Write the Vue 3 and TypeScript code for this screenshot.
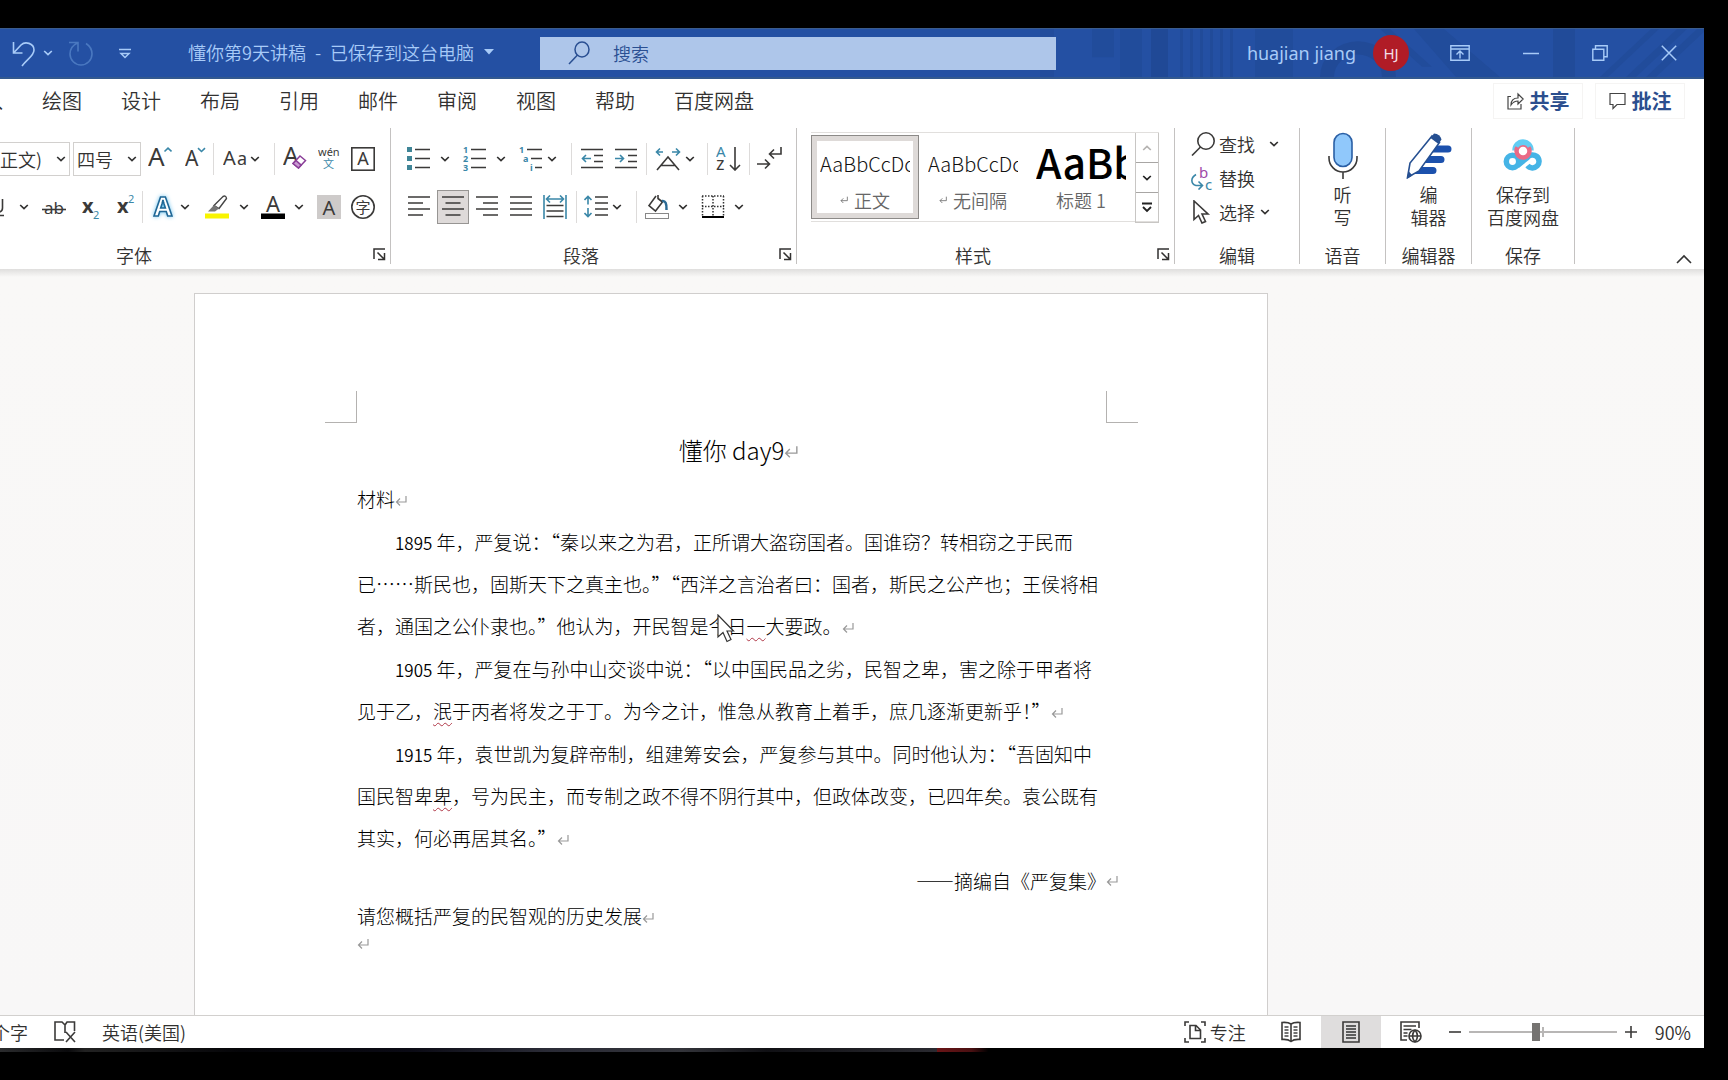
<script setup lang="ts">
import { ref } from 'vue'

const tabs: string[] = ['插入', '绘图', '设计', '布局', '引用', '邮件', '审阅', '视图', '帮助', '百度网盘']
const search = ref('')
const zoom = ref(45)
</script>

<template>
  <div class="screen" lang="zh-CN">
    <svg class="defs" aria-hidden="true">
      <symbol id="chev" viewBox="0 0 10 6"><path d="M1.2 1 5 4.6 8.800 1" fill="none" stroke="currentColor" stroke-width="1.7" /></symbol>
      <symbol id="ret" viewBox="0 0 12 12"><path d="M11 1v6H1.500M5 3.500 1.500 7 5 10.500" fill="none" stroke="currentColor" stroke-width="1.200" /></symbol>
      <symbol id="launch" viewBox="0 0 13 13"><path d="M1 11V1h11M4.500 4.500l6 6M11.500 5v6.500H5" fill="none" stroke="currentColor" stroke-width="1.500" /></symbol>
    </svg>

    <div class="window">
      <header class="titlebar">
        <svg class="pattern" viewBox="0 0 664 51" preserveAspectRatio="none" aria-hidden="true">
          <g fill="#1b3f80" opacity=".8">
            <rect x="0" y="0" width="14" height="51" opacity=".25" />
            <rect x="52" y="0" width="22" height="30" opacity=".3" />
            <rect x="80" y="0" width="22" height="51" opacity=".3" />
            <rect x="111" y="0" width="17" height="51" opacity=".45" />
            <path d="M140 0h3v51h-3zM150 0h3v51h-3zM160 0h3v51h-3zM170 0h3v51h-3zM180 0h3v51h-3zM190 0h3v51h-3z" opacity=".35" />
            <rect x="215" y="0" width="38" height="51" opacity=".3" />
            <path d="M280 51a38 38 0 0 1 76 0h-14a24 24 0 0 0-48 0z" opacity=".4" />
            <path d="M374 0h30l56 51h-44zM340 0h10l42 40h-10z" opacity=".3" />
            <rect x="513" y="0" width="22" height="51" opacity=".35" />
            <path d="M586 51 637 0h10l-51 51zM606 51 657 0h7v3l-48 48zM560 51 611 0h8l-51 51z" opacity=".3" />
          </g>
        </svg>
        <div class="quick">
          <button class="ib undo" aria-label="撤消">
            <svg width="24" height="28" viewBox="0 0 24 28"><path d="M1.500 3v11h9M2 13.500 9 6c4-4 13-2 13 5 0 6-7 9-12 16" fill="none" stroke="currentColor" stroke-width="1.600" /></svg>
            <svg class="ch" width="10" height="6"><use href="#chev" /></svg>
          </button>
          <button class="ib redo" aria-label="重复">
            <svg width="26" height="28" viewBox="0 0 26 28"><path d="M1 3.500h9v9M9.500 4C3 7 2 12 2 15c0 6 5 11 11 11s11-5 11-11c0-4-2-8-6-10.500" fill="none" stroke="currentColor" stroke-width="1.600" /></svg>
          </button>
          <button class="ib custom" aria-label="自定义快速访问工具栏">
            <svg width="12" height="11" viewBox="0 0 12 11"><path d="M0 1.500h12M2 5.500h8L6 9.500z" fill="none" stroke="currentColor" stroke-width="1.500" /></svg>
          </button>
        </div>
        <button class="ib docname">
          <span>懂你第9天讲稿</span><span class="dash">-</span><span>已保存到这台电脑</span>
          <svg width="10" height="6" viewBox="0 0 10 6"><path d="M0 0h10L5 5.500z" fill="currentColor" /></svg>
        </button>
        <label class="search">
          <svg width="22" height="24" viewBox="0 0 22 24"><g fill="none" stroke="#2a4f92" stroke-width="1.500"><ellipse cx="14" cy="8.500" rx="7" ry="7.500" /><path d="M9.500 14 1 23" /></g></svg>
          <input v-model="search" type="text" placeholder="搜索" aria-label="搜索" />
        </label>
        <div class="account">
          <span class="user">huajian jiang</span>
          <span class="avatar">HJ</span>
        </div>
        <div class="winctl">
          <button class="ib" aria-label="功能区显示选项"><svg width="20" height="16" viewBox="0 0 20 16"><path d="M.8.8h18.400v14.400H.8zM.8 4h18.400M10 13.500V6.500M6.500 9.500 10 6l3.500 3.500" fill="none" stroke="currentColor" stroke-width="1.400" /></svg></button>
          <button class="ib" aria-label="最小化"><svg width="16" height="16" viewBox="0 0 16 16"><path d="M0 8.500h16" stroke="currentColor" stroke-width="1.500" /></svg></button>
          <button class="ib" aria-label="还原"><svg width="16" height="16" viewBox="0 0 16 16"><path d="M.8 4.200h11v11h-11zM3.500 4V.8h11.700v11H12" fill="none" stroke="currentColor" stroke-width="1.400" /></svg></button>
          <button class="ib" aria-label="关闭"><svg width="16" height="16" viewBox="0 0 16 16"><path d="M.8.8l14.400 14.400M15.200.8.8 15.200" stroke="currentColor" stroke-width="1.500" /></svg></button>
        </div>
      </header>

      <div class="tabrow">
        <nav class="tabs">
          <button v-for="t in tabs" :key="t" class="ib">{{ t }}</button>
        </nav>
        <div class="collab">
          <button class="share">
            <svg width="17" height="18" viewBox="0 0 17 18"><path d="M4 4.500H1V17h13v-5M4 13c0-5 3-7 7-7V2l5.200 5-5.200 5V9c-3 0-5 1-7 4z" fill="none" stroke="#444" stroke-width="1.200" /></svg>共享
          </button>
          <button class="share">
            <svg width="17" height="18" viewBox="0 0 17 18"><path d="M1 1.500h15v11H8l-4 4v-4H1z" fill="none" stroke="#444" stroke-width="1.200" /></svg>批注
          </button>
        </div>
      </div>

      <section class="ribbon">
        <!-- 字体 -->
        <div class="group font-group">
          <div class="row f1">
            <select class="combo" aria-label="字体"><option>正文)</option></select>
            <select class="combo size" aria-label="字号"><option>四号</option></select>
            <button class="ib" aria-label="增大字号"><svg width="24" height="24" viewBox="0 0 24 24"><text x="0" y="19" font-size="26">A</text><path class="b" d="M16.500 4.500 20 1.200l3.500 3.300" /></svg></button>
            <button class="ib" aria-label="减小字号"><svg width="24" height="24" viewBox="0 0 24 24"><text x="0" y="19" font-size="21">A</text><path class="b" d="M13 1.200l3.500 3.300L20 1.200" /></svg></button>
            <i class="sep"></i>
            <button class="ib" aria-label="更改大小写"><svg width="24" height="24" viewBox="0 0 24 24"><text x="0" y="18" font-size="20">A</text><text x="14" y="18" font-size="18">a</text></svg><svg class="ch c1" width="10" height="6"><use href="#chev" /></svg></button>
            <i class="sep"></i>
            <button class="ib" aria-label="清除所有格式"><svg width="26" height="24" viewBox="0 0 26 24"><text x="0" y="18" font-size="25">A</text><path d="M10 16.500 17 9l5.500 4.500L15.500 21z" fill="#fff" stroke="#8a3e98" stroke-width="1.500" /><path d="M10 16.500l3-3 5.200 4.600-2.700 2.900z" fill="#c99ad2" stroke="#8a3e98" stroke-width="1.500" /></svg></button>
            <button class="ib" aria-label="拼音指南"><svg width="24" height="24" viewBox="0 0 24 24"><text x="0" y="9" font-size="11">wén</text><text x="5" y="21" font-size="11" class="tb">文</text></svg></button>
            <button class="ib" aria-label="字符边框"><svg width="24" height="24" viewBox="0 0 24 24"><rect class="d" x=".8" y=".8" width="22.400" height="22.400" /><text x="12" y="18" font-size="18" text-anchor="middle">A</text></svg></button>
          </div>
          <div class="row f2">
            <button class="ib" aria-label="下划线"><svg width="10" height="24" viewBox="0 0 10 24"><path class="d" d="M2.500 4v9c0 2-1 3.500-3 4M-1 20.500h5" /></svg><svg class="ch c7" width="10" height="6"><use href="#chev" /></svg></button>
            <button class="ib" aria-label="删除线"><svg width="24" height="24" viewBox="0 0 24 24"><text x="2" y="19" font-size="17">ab</text><path class="d" d="M0 14.500h24" /></svg></button>
            <button class="ib" aria-label="下标"><svg width="20" height="24" viewBox="0 0 20 24"><text x="0" y="18" font-size="20" class="bold">x</text><text x="11" y="24" font-size="11" class="tb">2</text></svg></button>
            <button class="ib" aria-label="上标"><svg width="20" height="24" viewBox="0 0 20 24"><text x="0" y="18" font-size="20" class="bold">x</text><text x="11" y="8" font-size="11" class="tb">2</text></svg></button>
            <i class="sep"></i>
            <button class="ib" aria-label="文本效果"><svg class="glow" width="24" height="24" viewBox="0 0 24 24"><text x="11" y="21" font-size="26" text-anchor="middle" class="fx">A</text></svg><svg class="ch c3" width="10" height="6"><use href="#chev" /></svg></button>
            <button class="ib" aria-label="突出显示"><svg width="26" height="24" viewBox="0 0 26 24"><rect x="1" y="18.500" width="24" height="5" fill="#f8f400" /><path d="M10 10.500 19 1.500q3-1.500 3.500 2L15 13.500z" fill="#fff" stroke="#444" stroke-width="1.400" /><path d="M10 10 4 16.500h7l4-3z" fill="#777" /></svg><svg class="ch c7" width="10" height="6"><use href="#chev" /></svg></button>
            <button class="ib" aria-label="字体颜色"><svg width="24" height="24" viewBox="0 0 24 24"><text x="12" y="16.500" font-size="22" text-anchor="middle">A</text><rect y="18.500" width="24" height="5.500" /></svg><svg class="ch c7" width="10" height="6"><use href="#chev" /></svg></button>
            <button class="ib" aria-label="字符底纹"><svg width="24" height="24" viewBox="0 0 24 24"><rect width="24" height="24" fill="#cecbca" /><text x="12" y="19.500" font-size="20" text-anchor="middle">A</text></svg></button>
            <button class="ib" aria-label="带圈字符"><svg width="24" height="24" viewBox="0 0 24 24"><circle class="d" cx="12" cy="12" r="11.200" /><text x="12" y="17.500" font-size="15" text-anchor="middle">字</text></svg></button>
          </div>
          <div class="glabel font-label"><span>字体</span><button class="ib launch" aria-label="字体设置"><svg width="13" height="13"><use href="#launch" /></svg></button></div>
        </div>

        <!-- 段落 -->
        <div class="group para-group">
          <div class="row p1">
            <button class="ib" aria-label="项目符号"><svg width="24" height="24" viewBox="0 0 24 24"><path d="M0 0h5v5H0zM0 9h5v5H0zM0 18h5v5H0z" fill="#3f8597" /><path class="d" d="M8 2.500h15M8 11.500h15M8 20.500h15" /></svg><svg class="ch c7" width="10" height="6"><use href="#chev" /></svg></button>
            <button class="ib" aria-label="编号"><svg width="24" height="24" viewBox="0 0 24 24"><g class="tb" font-size="9"><text class="bold" x="0" y="6">1</text><text class="bold" x="0" y="15">2</text><text class="bold" x="0" y="24">3</text></g><path class="d" d="M8 2.500h15M8 11.500h15M8 20.500h15" /></svg><svg class="ch c7" width="10" height="6"><use href="#chev" /></svg></button>
            <button class="ib" aria-label="多级列表"><svg width="24" height="24" viewBox="0 0 24 24"><g class="tb" font-size="9"><text class="bold" x="0" y="6">1</text><text class="bold" x="4" y="15">a</text><text class="bold" x="11" y="24">i</text></g><path class="d" d="M8 2.500h15M12 11.500h11M16 20.500h7" /></svg><svg class="ch c3" width="10" height="6"><use href="#chev" /></svg></button>
            <i class="sep"></i>
            <button class="ib" aria-label="减少缩进量"><svg width="24" height="24" viewBox="0 0 24 24"><path class="d" d="M0 2.500h22M13 8.500h9M13 14.500h9M0 20.500h22" /><path class="b" d="M10 11.500H1.500M5 8l-3.500 3.500L5 15" /></svg></button>
            <button class="ib" aria-label="增加缩进量"><svg width="24" height="24" viewBox="0 0 24 24"><path class="d" d="M0 2.500h22M13 8.500h9M13 14.500h9M0 20.500h22" /><path class="b" d="M0 11.500h8.500M5 8l3.500 3.500L5 15" /></svg></button>
            <i class="sep"></i>
            <button class="ib" aria-label="中文版式"><svg width="26" height="24" viewBox="0 0 26 24"><path class="b" d="M8 5H1.500M5 1.500 1.500 5 5 8.500M17 5h7M21 1.500 24.500 5 21 8.500" /><path class="d" d="M2 23 13 10l11 13M6 18.500h14" /></svg><svg class="ch c3" width="10" height="6"><use href="#chev" /></svg></button>
            <i class="sep"></i>
            <button class="ib" aria-label="排序"><svg width="25" height="24" viewBox="0 0 25 24"><text x="0" y="10" font-size="15" class="tb">A</text><text x="0" y="23" font-size="18">z</text><path class="d" d="M19 0v23M14 18l5 5 5-5" /></svg></button>
            <i class="sep"></i>
            <button class="ib" aria-label="显示编辑标记"><svg width="25" height="24" viewBox="0 0 25 24"><path class="d" d="M24 0v7H13M17 2.500 12.500 7l4.500 4.500M0 17h12M8 12.500l4.500 4.500L8 21.500" /></svg></button>
          </div>
          <div class="row p2">
            <button class="ib" aria-label="左对齐"><svg width="22" height="24" viewBox="0 0 22 24"><path class="d" d="M0 2h22M0 8h15M0 14h22M0 20h15" /></svg></button>
            <button class="ib picked" aria-label="居中" aria-pressed="true"><svg width="22" height="24" viewBox="0 0 22 24"><path class="d" d="M0 2h22M3.500 8h15M0 14h22M3.500 20h15" /></svg></button>
            <button class="ib" aria-label="右对齐"><svg width="22" height="24" viewBox="0 0 22 24"><path class="d" d="M0 2h22M7 8h15M0 14h22M7 20h15" /></svg></button>
            <button class="ib" aria-label="两端对齐"><svg width="22" height="24" viewBox="0 0 22 24"><path class="d" d="M0 2h22M0 8h22M0 14h22M0 20h22" /></svg></button>
            <button class="ib" aria-label="分散对齐"><svg width="24" height="24" viewBox="0 0 24 24"><path class="b" d="M1 0v24M23 0v24M3.500 4h17M7 .5 3.500 4 7 7.500M17 .5 20.500 4 17 7.500" /><path class="d" d="M3.500 10.500h17M3.500 16h17M3.500 21.500h17" /></svg></button>
            <i class="sep"></i>
            <button class="ib" aria-label="行距"><svg width="24" height="24" viewBox="0 0 24 24"><path class="b" d="M4 1.500v8M.5 5 4 1.500 7.500 5M4 13v8M.5 18 4 21.500 7.500 18" /><path class="d" d="M11 2h13M11 8h13M11 14h13M11 20h13" /></svg><svg class="ch c3" width="10" height="6"><use href="#chev" /></svg></button>
            <i class="sep"></i>
            <button class="ib" aria-label="底纹"><svg width="24" height="24" viewBox="0 0 24 24"><path class="d" d="M11 1 4 10.500l6.500 5.500 7-9L13 3.500V0" /><path d="M17 6q5-1 4.500 9" fill="none" stroke="#2b6a94" stroke-width="2.500" /><rect x=".5" y="18.500" width="23" height="5" fill="#fff" stroke="#888" /></svg><svg class="ch c7" width="10" height="6"><use href="#chev" /></svg></button>
            <button class="ib" aria-label="边框"><svg width="24" height="24" viewBox="0 0 24 24"><path d="M1 1h22M1 11.500h22M1.500 1v20M12 1v20M22.500 1v20" fill="none" stroke="#333" stroke-width="1.500" stroke-dasharray="1.500 1.500" /><path d="M1 22h22" stroke="#000" stroke-width="2" /></svg><svg class="ch c7" width="10" height="6"><use href="#chev" /></svg></button>
          </div>
          <div class="glabel"><span>段落</span><button class="ib launch" aria-label="段落设置"><svg width="13" height="13"><use href="#launch" /></svg></button></div>
        </div>

        <!-- 样式 -->
        <div class="group style-group">
          <div class="gallery">
            <button class="style chosen"><span class="sample">AaBbCcDc</span><span class="sname"><svg width="8" height="10"><use href="#ret" /></svg>正文</span></button>
            <button class="style"><span class="sample">AaBbCcDc</span><span class="sname"><svg width="8" height="10"><use href="#ret" /></svg>无间隔</span></button>
            <button class="style"><span class="sample big">AaBb</span><span class="sname">标题 1</span></button>
            <div class="scroller">
              <button class="ib off" aria-label="上一行"><svg class="up" width="10" height="6"><use href="#chev" /></svg></button>
              <button class="ib" aria-label="下一行"><svg width="10" height="6"><use href="#chev" /></svg></button>
              <button class="ib" aria-label="其他"><svg width="12" height="11" viewBox="0 0 12 11"><path d="M1 1.500h10M2 5l4 4 4-4" fill="none" stroke="#222" stroke-width="1.800" /></svg></button>
            </div>
          </div>
          <div class="glabel"><span>样式</span><button class="ib launch" aria-label="样式窗格"><svg width="13" height="13"><use href="#launch" /></svg></button></div>
        </div>

        <!-- 编辑 -->
        <div class="group edit-group">
          <div class="edits">
            <button class="ib"><svg width="24" height="24" viewBox="0 0 24 24"><circle class="d" cx="15" cy="9" r="8.200" /><path class="d" d="M9.500 15 1 23.500" /></svg>查找<svg class="far" width="10" height="6"><use href="#chev" /></svg></button>
            <button class="ib"><svg width="24" height="24" viewBox="0 0 24 24"><text x="8" y="12" font-size="15" class="own">b</text><text x="14" y="24" font-size="15" class="tb">c</text><path class="b" d="M5 8.500C-1 12 0 18 5 19.500h6M7.500 15.500l4 4-4 4" /></svg>替换</button>
            <button class="ib"><svg width="24" height="24" viewBox="0 0 24 24"><path class="d" d="M3 1v18.500l4.500-4 3.500 7.500 3.500-1.500-3.500-7.500h6z" /></svg>选择<svg class="near" width="10" height="6"><use href="#chev" /></svg></button>
          </div>
          <div class="glabel"><span>编辑</span></div>
        </div>

        <div class="group voice-group">
          <button class="ib large">
            <svg width="30" height="50" viewBox="0 0 30 50"><rect x="6" y="2.500" width="18" height="33" rx="9" fill="#90c8fb" stroke="#2a5fa5" stroke-width="1.600" /><path class="d" d="M1 25v2a14 14 0 0 0 28 0v-2M15 41v7" /></svg>
            <span>听<br />写</span>
          </button>
          <div class="glabel"><span>语音</span></div>
        </div>

        <div class="group editor-group">
          <button class="ib large">
            <svg width="46" height="50" viewBox="0 0 46 50"><g fill="#1c51ad"><path d="M30 14.500h12a3.500 3.500 0 0 1 0 7H25zM24 25h11a3.500 3.500 0 0 1 0 7H18zM16 36h11a3.500 3.500 0 0 1 0 7H8z" /></g><path d="M26 5 4 32 1.500 46.500 13 40 33.500 11.500z" fill="#fff" stroke="#254f91" stroke-width="1.600" /><path d="M24.500 7 28 2.500q6 .5 7.500 6L32.500 13z" fill="#254f91" /><path d="M1 48l1.500-8 4 4.500z" fill="#254f91" /></svg>
            <span>编<br />辑器</span>
          </button>
          <div class="glabel"><span>编辑器</span></div>
        </div>

        <div class="group save-group">
          <button class="ib large">
            <svg width="42" height="50" viewBox="0 0 42 50"><g fill="none" stroke-width="5.500"><circle cx="10.500" cy="30.500" r="6.200" stroke="#45b4e6" /><path d="M15.500 34.500 25 27a6.500 6.500 0 1 1 .5 7.500" stroke="#45b4e6" /><path d="M13 19.500a8 8.500 0 1 1 16 0" stroke="#62cdf4" /><circle cx="21" cy="20" r="6.500" stroke="#ea6a86" stroke-width="4.500" /><path d="M14.200 15.500a8 8 0 0 1 13.600 0" stroke="#62cdf4" stroke-width="4.500" /></g></svg>
            <span>保存到<br />百度网盘</span>
          </button>
          <div class="glabel"><span>保存</span></div>
        </div>

        <button class="ib collapse" aria-label="折叠功能区"><svg width="16" height="10" viewBox="0 0 16 10"><path d="M1 9l7-7 7 7" fill="none" stroke="#333" stroke-width="1.600" /></svg></button>
      </section>

      <main class="canvas">
        <article class="page">
          <div class="corners"><i class="corner l"></i><i class="corner r"></i></div>
          <div class="text">
            <h1>懂你 day9<svg class="ret"><use href="#ret" /></svg></h1>
            <p>材料<svg class="ret"><use href="#ret" /></svg></p>
            <p class="ind"><b>1895</b> 年，严复说：“秦以来之为君，正所谓大盗窃国者。国谁窃？转相窃之于民而<br />已……斯民也，固斯天下之真主也。”“西洋之言治者曰：国者，斯民之公产也；王侯将相<br />者，通国之公仆隶也。”他认为，开民智是今日<u>一</u>大要政。<svg class="ret"><use href="#ret" /></svg></p>
            <p class="ind"><b>1905</b> 年，严复在与孙中山交谈中说：“以中国民品之劣，民智之卑，害之除于甲者将<br />见于乙，<u>泯</u>于丙者将发之于丁。为今之计，惟急从教育上着手，庶几逐渐更新乎<span class="half">！</span>”<svg class="ret"><use href="#ret" /></svg></p>
            <p class="ind"><b>1915</b> 年，袁世凯为复辟帝制，组建筹安会，严复参与其中。同时他认为：“吾固知中<br />国民智卑<u>卑</u>，号为民主，而专制之政不得不阴行其中，但政体改变，已四年矣。袁公既有<br />其实，何必再居其名。”<svg class="ret"><use href="#ret" /></svg></p>
            <p class="source"><span>——摘编自《严复集》</span><svg class="ret"><use href="#ret" /></svg></p>
            <p class="tight">请您概括严复的民智观的历史发展<svg class="ret"><use href="#ret" /></svg></p>
            <p class="tight"><svg class="ret"><use href="#ret" /></svg></p>
          </div>
          <svg class="pointer" width="18" height="30" viewBox="0 0 18 30" aria-hidden="true"><path d="M1 1v22l5-4.500 4 9 4-2-4-8.500h6.500z" fill="#fff" stroke="#333" stroke-width="1.200" /></svg>
        </article>
      </main>

      <footer class="status">
        <div class="left">
          <button class="ib count">个字</button>
          <button class="ib" aria-label="校对"><svg width="22" height="22" viewBox="0 0 22 22"><path class="d" d="M10 19H1V1h7l3 3v8M11 4l2-3h7.500v9M12 11l9 10M21 11l-9 10" /></svg></button>
          <button class="ib lang">英语(美国)</button>
        </div>
        <div class="right">
          <button class="ib focus"><svg width="22" height="22" viewBox="0 0 22 22"><path class="d" d="M5 1H1v4M1 17v4h4M17 1h4v4M21 17v4h-4M6 4.500h6l4.500 4.500v8.500H6zM11.500 4.500V9.500h5" /></svg>专注</button>
          <button class="ib view" aria-label="阅读视图"><svg width="20" height="22" viewBox="0 0 20 22"><path class="d" d="M10 3Q7 1 1 1.500v17q6-.5 9 2 3-2.500 9-2v-17Q13 1 10 3zM10 3v17.500" /><path d="M3.500 6h4M3.500 9h4M3.500 12h4M3.500 15h4M12.500 6h4M12.500 9h4M12.500 12h4M12.500 15h4" stroke="#444" stroke-width="1.500" /></svg></button>
          <button class="ib view on" aria-label="页面视图"><svg width="18" height="22" viewBox="0 0 18 22"><path class="d" d="M1 1h16v20H1z" /><path d="M4 5h10M4 8h10M4 11h10M4 14h10M4 17h10" stroke="#333" stroke-width="1.600" /></svg></button>
          <button class="ib view" aria-label="Web 版式视图"><svg width="22" height="22" viewBox="0 0 22 22"><path class="d" d="M19 7V1H1v18h6M3.500 5H16M3.500 8.500h8M3.500 12h4M3.500 15h4" /><circle class="d" cx="15" cy="15" r="6" /><path class="d" d="M9 15h12M15 9q-5 6 0 12M15 9q5 6 0 12" /></svg></button>
          <button class="ib minus" aria-label="缩小"><svg width="12" height="12"><path class="d" d="M0 6h12" /></svg></button>
          <input v-model="zoom" class="slider" type="range" min="0" max="100" aria-label="缩放" />
          <button class="ib plus" aria-label="放大"><svg width="12" height="12"><path class="d" d="M0 6h12M6 0v12" /></svg></button>
          <button class="ib pct">90%</button>
        </div>
      </footer>
      <div class="desk"></div>
    </div>
  </div>
</template>

<style>
body {
  margin: 0;
  background: #000;
}
</style>

<style scoped>
* {
  box-sizing: border-box;
}
.screen {
  min-height: 100vh;
  display: flex;
  padding: 28px 24px 28px 0;
  background: #000;
  color: #323130;
  font: 350 18px/24px 'Noto Sans CJK SC', 'Noto Sans', sans-serif;
  overflow: hidden;
}
.defs {
  position: absolute;
  width: 0;
  height: 0;
}
.window {
  flex: 1;
  min-width: 0;
  display: flex;
  flex-direction: column;
  overflow: hidden;
  white-space: nowrap;
}
.ib {
  display: flex;
  align-items: center;
  padding: 0;
  border: 0;
  background: none;
  color: inherit;
  font: inherit;
  white-space: nowrap;
}
svg {
  flex: none;
  display: block;
}
svg text {
  fill: #3b3a39;
  font-family: 'Noto Sans', 'Noto Sans CJK SC', sans-serif;
  font-weight: 400;
}
svg .bold {
  font-weight: 700;
}
svg .tb,
svg .tb text {
  fill: #3a87a8;
}
svg text.own {
  fill: #a04aa8;
}
.d {
  fill: none;
  stroke: #3b3a39;
  stroke-width: 1.6;
}
.b {
  fill: none;
  stroke: #3a87a8;
  stroke-width: 1.6;
}

/* title bar */
.titlebar {
  position: relative;
  display: flex;
  align-items: center;
  height: 51px;
  background: #2450a3;
  border-top: 1px solid #3a5c8e;
  border-bottom: 2px solid #33598f;
  color: #a8cbf8;
}
.pattern {
  position: absolute;
  top: 0;
  right: 0;
  width: 664px;
  height: 100%;
}
.titlebar > :not(.pattern) {
  position: relative;
}
.quick {
  display: flex;
  align-items: center;
  width: 188px;
  padding-left: 12px;
}
.undo {
  width: 56px;
}
.undo .ch {
  margin-left: 7px;
}
.redo {
  width: 51px;
  color: #4a78c0;
}
.docname {
  width: 352px;
  padding-bottom: 2px;
}
.dash {
  margin: 0 9px;
}
.docname svg {
  margin-left: 10px;
}
.search {
  display: flex;
  align-items: center;
  width: 516px;
  height: 33px;
  padding-left: 28px;
  background: #aec6ea;
}
.search input {
  flex: 1;
  min-width: 0;
  margin-left: 23px;
  padding: 0;
  border: 0;
  outline: 0;
  background: none;
  color: #2a4f92;
  font: inherit;
}
.search input::placeholder {
  color: #2a4f92;
  opacity: 1;
}
.account {
  display: flex;
  align-items: center;
  gap: 17px;
  margin-left: auto;
}
.user {
  font-family: 'Noto Sans', sans-serif;
  font-weight: 400;
}
.avatar {
  width: 36px;
  height: 36px;
  border-radius: 50%;
  background: #b01c26;
  color: #f3dfe6;
  font: 15px/36px 'Noto Sans', sans-serif;
  text-align: center;
}
.winctl {
  display: flex;
  gap: 53px;
  padding: 0 27px 0 41px;
}

/* tabs */
.tabrow {
  display: flex;
  align-items: center;
  justify-content: space-between;
  height: 44px;
  background: #fff;
  font-size: 20px;
}
.tabs {
  display: flex;
  gap: 39px;
  margin-left: -37px;
}
.collab {
  display: flex;
  gap: 12px;
  padding-right: 19px;
}
.share {
  display: flex;
  align-items: center;
  justify-content: center;
  gap: 6px;
  width: 90px;
  height: 36px;
  padding: 0;
  border: 1px solid #f5f4f3;
  background: #fff;
  color: #2b4e8e;
  font: inherit;
  font-weight: 700;
}

/* ribbon */
.ribbon {
  display: flex;
  padding: 5px 0;
  background: #fff;
}
.group {
  display: flex;
  flex-direction: column;
  flex: none;
  height: 136px;
  border-right: 1px solid #c4c2c1;
}
.font-group {
  width: 391px;
  padding-top: 7px;
}
.para-group {
  width: 406px;
  padding-top: 7px;
}
.style-group {
  width: 378px;
}
.edit-group {
  width: 125px;
}
.voice-group,
.editor-group {
  width: 86px;
}
.save-group {
  width: 103px;
}
.row {
  display: grid;
  align-items: center;
  height: 48px;
}
.f1 {
  grid-template-columns: 73px 75px 37px 28px 10px 51px 9px 35px 33px 24px;
}
.f2 {
  grid-template-columns: 42px 40px 35px 25px 10px 52px 57px 56px 34px 24px;
}
.p1 {
  grid-template-columns: 56px 56px 52px 10px 34px 31px 9px 52px 9px 33px 8px 25px;
  padding-left: 16px;
}
.p2 {
  grid-template-columns: 29px 39px 34px 33px 33px 8px 52px 9px 56px 52px;
  padding-left: 17px;
}
.sep {
  width: 1px;
  height: 32px;
  background: #dddbda;
}
.combo {
  appearance: none;
  width: 70px;
  height: 34px;
  padding: 0;
  border: 1px solid #d2d0ce;
  border-left: 0;
  border-radius: 0;
  background: #fff url("data:image/svg+xml,%3Csvg xmlns='http://www.w3.org/2000/svg' width='10' height='6'%3E%3Cpath d='M1.2 1 5 4.6 8.8 1' fill='none' stroke='%23333' stroke-width='1.700'/%3E%3C/svg%3E") no-repeat right 3px center;
  color: inherit;
  font: inherit;
}
.combo.size {
  width: 68px;
  padding-left: 3px;
  border-left: 1px solid #d2d0ce;
}
.c1 {
  margin-left: 3px;
}
.c3 {
  margin-left: 4px;
}
.c7 {
  margin-left: 9px;
}
.glow {
  overflow: visible;
  filter: drop-shadow(0 0 2px #6fc3ee);
}
svg .fx {
  fill: #fff;
  stroke: #1f6796;
  stroke-width: 1.6;
  font-weight: 700;
}
.picked {
  justify-content: center;
  width: 32px;
  height: 34px;
  border: 1px solid #979593;
  background: #dedad9;
}
.glabel {
  display: flex;
  align-items: center;
  margin-top: auto;
  height: 19px;
  line-height: 18px;
}
.glabel span {
  flex: 1;
  text-align: center;
}
.font-label span {
  flex: none;
  width: 268px;
}
.font-label .launch {
  margin-left: auto;
}
.launch {
  width: 17px;
}
.style-group .launch,
.para-group .launch {
  margin-left: 8px;
}
.gallery {
  display: flex;
  height: 90px;
  margin: 4px 15px 0 14px;
  border: 1px solid #e1dfdd;
  border-width: 1px 0;
}
.style {
  display: flex;
  flex-direction: column;
  align-items: center;
  width: 108px;
  height: 84px;
  margin-top: 2px;
  padding: 4px 8px 0;
  border: 1px solid transparent;
  background: none;
  color: #666;
  font: inherit;
}
.chosen {
  border: 1px solid #8c8a88;
  box-shadow: inset 0 0 0 5px #dedad8;
}
.sample {
  width: 90px;
  height: 48px;
  overflow: hidden;
  color: #111;
  font-size: 20px;
  font-weight: 300;
  line-height: 48px;
  text-align: left;
}
.big {
  color: #000;
  font-size: 41px;
  font-weight: 500;
  line-height: 42px;
}
.sname {
  display: flex;
  align-items: center;
  gap: 6px;
  line-height: 24px;
  white-space: pre;
}
.scroller {
  display: flex;
  flex-direction: column;
  width: 24px;
  height: 90px;
  border: 1px solid #c8c6c4;
  border-width: 0 1px 1px;
  color: #222;
}
.scroller .ib {
  flex: 1;
  justify-content: center;
}
.scroller .ib + .ib {
  border-top: 1px solid #a8a6a4;
}
.scroller .off {
  color: #b5b3b1;
}
.up {
  transform: rotate(180deg);
}
.edits {
  display: flex;
  flex-direction: column;
  gap: 10px;
  padding: 4px 0 0 16px;
}
.edits .ib svg:first-child {
  margin-right: 4px;
}
.far {
  margin-left: 14px;
}
.near {
  margin-left: 5px;
}
.large {
  flex-direction: column;
  padding-top: 3px;
  line-height: 23px;
}
.large span {
  margin-top: 2px;
}
.collapse {
  align-self: flex-end;
  margin: 0 12px 0 auto;
}

/* document */
.canvas {
  flex: 1 0 0;
  min-height: 0;
  overflow: hidden;
  padding: 24px 0 0 194px;
  background: linear-gradient(#dfdedd, #f9f8f7 8px, #f8f7f7);
}
.page {
  position: relative;
  width: 1074px;
  height: 1518px;
  border: 1px solid #d0cecd;
  background: #fff;
}
.corners {
  display: flex;
  justify-content: space-between;
  padding: 97px 129px 0 130px;
}
.corner {
  width: 32px;
  height: 32px;
  border-bottom: 1px solid #b4b2b0;
}
.corner.l {
  border-right: 1px solid #b4b2b0;
}
.corner.r {
  border-left: 1px solid #b4b2b0;
}
.text {
  padding: 0 161px 0 162px;
  color: #000;
  font-size: 19px;
  font-weight: 300;
  line-height: 42px;
}
h1 {
  margin: 0 0 2px;
  font-size: 24px;
  font-weight: 300;
  line-height: 53px;
  text-align: center;
}
h1 .ret {
  width: 14px;
  height: 16px;
  margin-right: -14px;
}
p {
  margin: 0 0 1px;
}
.ind {
  text-indent: 38px;
}
.ind b {
  font-size: 17px;
  font-weight: 350;
  line-height: 1;
}
.half {
  font-feature-settings: 'halt';
}
u {
  text-decoration: underline wavy #b03848 1px;
  text-underline-offset: 3px;
}
.ret {
  display: inline-block;
  width: 12px;
  height: 12px;
  color: #999;
}
.source {
  display: flex;
  align-items: center;
  justify-content: flex-end;
  margin-right: -12px;
}
.tight {
  margin: 0;
  line-height: 26px;
}
.pointer {
  position: absolute;
  left: 522px;
  top: 320px;
}

/* status bar */
.status {
  display: flex;
  align-items: center;
  justify-content: space-between;
  height: 33px;
  border-top: 1px solid #d2d0ce;
  background: #fff;
}
.left,
.right {
  display: flex;
  align-items: center;
}
.left {
  gap: 26px;
  margin-left: -8px;
}
.right {
  padding-right: 13px;
}
.focus {
  gap: 4px;
  margin-right: 15px;
}
.view {
  justify-content: center;
  width: 60px;
  height: 32px;
}
.on {
  background: #dfdddd;
}
.minus {
  margin-left: 8px;
}
.slider {
  appearance: none;
  width: 148px;
  height: 18px;
  margin: 0 8px;
  background: linear-gradient(#b8b6b5, #b8b6b5) center / 2px 10px no-repeat, linear-gradient(#b8b6b5, #b8b6b5) center / 100% 2px no-repeat;
}
.slider::-webkit-slider-thumb {
  appearance: none;
  width: 8px;
  height: 18px;
  border: 0;
  background: #757371;
}
.pct {
  margin-left: 18px;
}
.desk {
  height: 4px;
  background: linear-gradient(90deg, #2b2c2e, #0a0a0c 4%, #222 5%, #050508 14%, #0a0a14 24%, #2a2b36 32%, #33343a 40%, #101014 45%, #2a2a30 55%, #6a1416 55%, #4a1012 57%, #000 58%);
}
</style>
